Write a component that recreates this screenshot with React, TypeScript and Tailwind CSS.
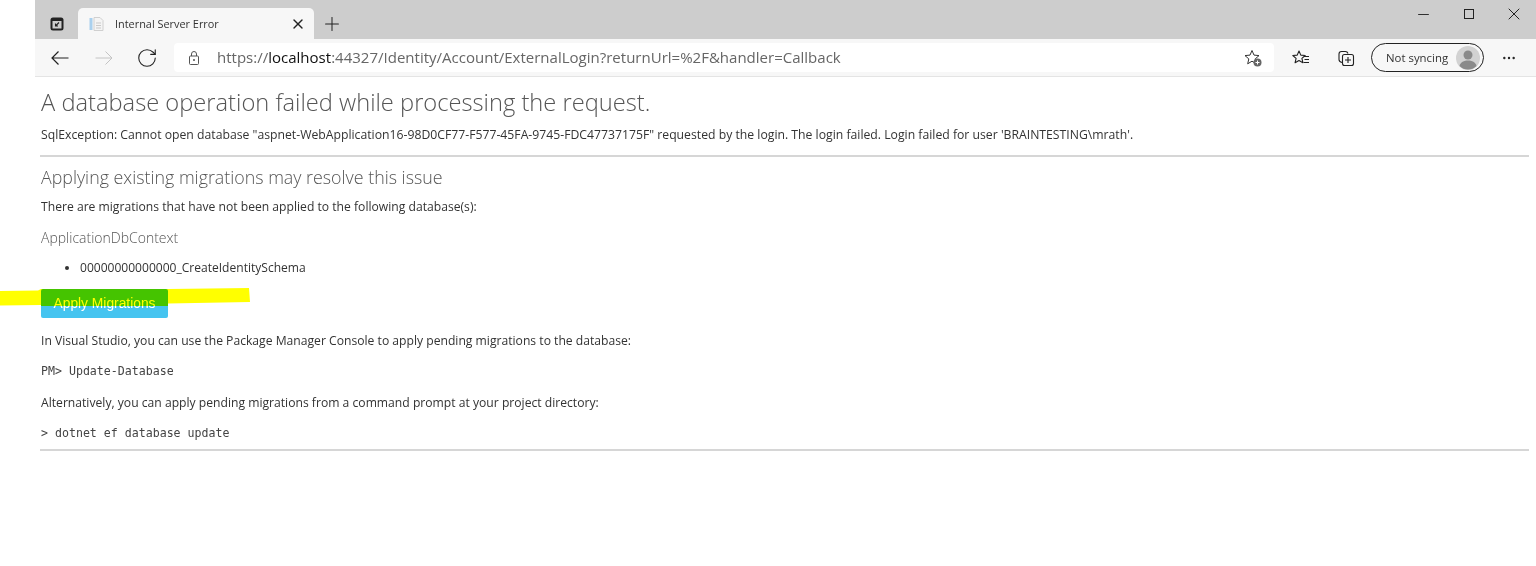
import { RotateCw, X, Plus, Minus, MoreHorizontal } from "lucide-react";

const sans = "font-['Open_Sans','Noto_Sans',sans-serif]";
const mono = "font-['DejaVu_Sans_Mono','Liberation_Mono',monospace]";

function TabActionsIcon() {
  return (
    <svg width="14" height="14" viewBox="0 0 14 14" fill="none">
      <rect x="0.5" y="0.5" width="13" height="13" rx="2.5" fill="#222" />
      <rect x="2.5" y="4" width="9" height="7.5" fill="#cdcdcd" />
      <path d="M9 5.5L5.5 9M5.5 6.5V9H8" stroke="#222" strokeWidth="1.1" />
    </svg>
  );
}

function PageIcon() {
  return (
    <svg width="16" height="16" viewBox="0 0 16 16" fill="none">
      <rect x="0.5" y="2" width="3" height="12" fill="#a9d0ee" />
      <path d="M5 1.5H11L14 4.5V14.5H5Z" fill="#f4f4f4" stroke="#d0d0d0" />
      <path d="M7 7H12M7 9.5H12M7 12H12" stroke="#c9c9c9" />
    </svg>
  );
}

function NavArrow({ flip, color, weight }: { flip?: boolean; color: string; weight: number }) {
  return (
    <svg width="18" height="14" viewBox="0 0 18 14" fill="none" stroke={color} strokeWidth={weight} className={flip ? "rotate-180" : ""}>
      <path d="M1 7H17.500M7.500 0.500L1 7L7.500 13.500" />
    </svg>
  );
}

function LockIcon() {
  return (
    <svg width="14" height="16" viewBox="0 0 14 16" fill="none" stroke="#555" strokeWidth="1">
      <rect x="2.5" y="6" width="9" height="8.5" rx="1" />
      <path d="M4.5 6V4a2.5 2.5 0 0 1 5 0v2" />
      <circle cx="7" cy="10" r="0.6" fill="#555" />
    </svg>
  );
}

function FavAddIcon() {
  return (
    <svg width="20" height="20" viewBox="0 0 20 20" fill="none">
      <path d="M9 2.500l2 4.600 5 .5-3.800 3.300 1.100 4.900L9 13.200l-4.300 2.600 1.100-4.900L2 7.600l5-.5z" stroke="#333" strokeWidth="1" strokeLinejoin="round" />
      <circle cx="14.500" cy="14.500" r="4" fill="#666" />
      <path d="M12.500 14.500h4M14.500 12.500v4" stroke="#fff" strokeWidth="1" />
    </svg>
  );
}

function FavoritesIcon() {
  return (
    <svg width="20" height="20" viewBox="0 0 20 20" fill="none" stroke="#222" strokeWidth="1.1" strokeLinejoin="round">
      <path d="M8 3l1.800 4.100 4.400.4-3.300 2.900 1 4.300L8 12.500l-3.900 2.200 1-4.300-3.300-2.900 4.400-.4z" />
      <path d="M13 8.500h5M13.500 11.500h4.500M12.500 14.500h5.500" />
    </svg>
  );
}

function CollectionsIcon() {
  return (
    <svg width="20" height="20" viewBox="0 0 20 20" fill="none" stroke="#222" strokeWidth="1.1">
      <path d="M6 14.500C3.800 14 3 13 3 11.500V6c0-1.500 1-2.500 2.500-2.500h4c1 0 2 .5 2.500 2" />
      <rect x="6.500" y="6.500" width="11" height="11" rx="2" />
      <path d="M12 9v6M9 12h6" />
    </svg>
  );
}

function AvatarIcon() {
  return (
    <svg width="24" height="24" viewBox="0 0 24 24">
      <circle cx="12" cy="12" r="12" fill="#d2d2d2" />
      <circle cx="12" cy="9" r="4.500" fill="#8a8a8a" />
      <path d="M3.500 20c1-4 4.500-5.500 8.500-5.500s7.500 1.500 8.500 5.500a12 12 0 0 1-17 0z" fill="#8a8a8a" />
    </svg>
  );
}

function BrowserChrome() {
  return (
    <div className={`${sans} shrink-0`}>
      {/* tab strip */}
      <div className="h-[39px] bg-[#cdcdcd] flex items-end relative">
        <div className="w-[43px] h-[31px] flex items-center justify-center">
          <TabActionsIcon />
        </div>
        <div className="w-[236px] h-[31px] bg-[#f7f7f7] rounded-t-[5px] flex items-center pl-[11px] pr-[8px]">
          <PageIcon />
          <span className="ml-[10px] mt-[1px] text-[10.900px] text-[#333] flex-1">Internal Server Error</span>
          <X size={16} strokeWidth={2} className="text-[#222]" />
        </div>
        <div className="w-[36px] h-[31px] flex items-center justify-center">
          <Plus size={22} strokeWidth={1.1} className="text-[#222]" />
        </div>
        <div className="ml-auto h-[28px] self-start flex items-center">
          <div className="w-[45px] flex justify-center"><Minus size={17} strokeWidth={1.300} className="text-[#222]" /></div>
          <div className="w-[45px] flex justify-center"><div className="w-[10px] h-[10px] border border-[#222]" /></div>
          <div className="w-[45px] flex justify-center"><X size={20} strokeWidth={1.200} className="text-[#222]" /></div>
        </div>
      </div>
      {/* toolbar */}
      <div className="h-[38px] bg-[#f7f7f7] border-b border-[#e4e4e4] flex items-center">
        <div className="w-[49px] flex justify-center"><NavArrow color="#222" weight={1.200} /></div>
        <div className="w-[39px] flex justify-center"><NavArrow flip color="#c4c4c4" weight={1} /></div>
        <div className="w-[47px] flex justify-center"><RotateCw size={22} strokeWidth={1.200} className="text-[#222]" /></div>
        <div className="ml-[4px] w-[1100px] h-[29px] bg-white rounded-[4px] flex items-center pl-[13px] pr-[11px]">
          <LockIcon />
          <div className="ml-[16px] text-[15.030px] text-[#666] flex-1 whitespace-nowrap">
            https://<span className="text-[#111]">localhost</span>:44327/Identity/Account/ExternalLogin?returnUrl=%2F&amp;handler=Callback
          </div>
          <FavAddIcon />
        </div>
        <div className="w-[54px] flex justify-center"><FavoritesIcon /></div>
        <div className="w-[36px] flex justify-center"><CollectionsIcon /></div>
        <div className="ml-[7px] w-[113px] h-[29px] rounded-full border border-[#222] flex items-center pl-[14px] pr-[3px] justify-between">
          <span className="text-[11.400px] text-[#333]">Not syncing</span>
          <AvatarIcon />
        </div>
        <div className="w-[50px] flex justify-center"><MoreHorizontal size={16} strokeWidth={1.600} className="text-[#222]" /></div>
      </div>
    </div>
  );
}

function ErrorPage() {
  return (
    <div className={`${sans} pl-[5px] pr-[7px] pt-[10px] text-[12.150px] leading-[17px] text-[#333]`}>
      <h1 className="pl-[1px] text-[23.700px] leading-[30px] font-light text-[#555]">
        A database operation failed while processing the request.
      </h1>
      <p className="pl-[1px] mt-[9px] text-[12.220px] whitespace-nowrap">
        SqlException: Cannot open database "aspnet-WebApplication16-98D0CF77-F577-45FA-9745-FDC47737175F" requested by the login. The login failed. Login failed for user 'BRAINTESTING\mrath'.
      </p>
      <hr className="mt-[12px] h-[2px] border-0 bg-[#d6d6d6]" />
      <h2 className="pl-[1px] mt-[9px] text-[17.820px] leading-[22px] font-light text-[#555]">
        Applying existing migrations may resolve this issue
      </h2>
      <p className="pl-[1px] mt-[10px]">There are migrations that have not been applied to the following database(s):</p>
      <h3 className="pl-[1px] mt-[14px] text-[14px] leading-[18px] font-light text-[#555]">ApplicationDbContext</h3>
      <ul className="mt-[12px] pl-[40px] list-disc text-[12.050px]">
        <li>00000000000000_CreateIdentitySchema</li>
      </ul>
      <div className="relative mt-[13px] pl-[1px]">
        <button className="block w-[127px] h-[29px] rounded-[2px] bg-[#45c4f0] text-white text-[13.800px] font-['Liberation_Sans',sans-serif]">
          Apply Migrations
        </button>
        {/* marker scribble over the button */}
        <svg className="absolute left-[-40px] top-[-1px] mix-blend-multiply" width="252" height="20" viewBox="0 0 252 20">
          <path d="M0 3L38 2.500L41 1H168L249 0L250 14L168 15.500V18H41V17L0 17.500Z" fill="#ffff00" />
        </svg>
      </div>
      <p className="pl-[1px] mt-[14px]">In Visual Studio, you can use the Package Manager Console to apply pending migrations to the database:</p>
      <code className={`${mono} block pl-[1px] mt-[14px] text-[11.600px] text-[#444]`}>PM&gt; Update-Database</code>
      <p className="pl-[1px] mt-[14px]">Alternatively, you can apply pending migrations from a command prompt at your project directory:</p>
      <code className={`${mono} block pl-[1px] mt-[14px] text-[11.600px] text-[#444]`}>&gt; dotnet ef database update</code>
      <hr className="mt-[7px] h-[2px] border-0 bg-[#d6d6d6]" />
    </div>
  );
}

export default function App() {
  return (
    <div className="w-[1536px] h-[566px] bg-white overflow-hidden pl-[35px]">
      <BrowserChrome />
      <ErrorPage />
    </div>
  );
}
